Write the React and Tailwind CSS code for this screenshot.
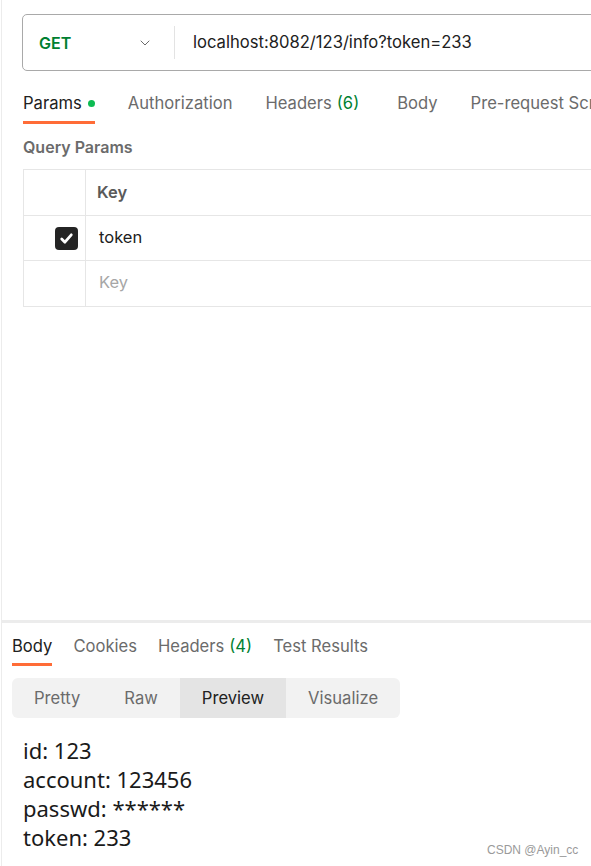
import { ChevronDown } from 'lucide-react'

const requestTabs = [
  { label: 'Params', dot: true, active: true },
  { label: 'Authorization' },
  { label: 'Headers', count: 6 },
  { label: 'Body', extra: true },
  { label: 'Pre-request Script' },
]

const responseTabs = [
  { label: 'Body', active: true },
  { label: 'Cookies' },
  { label: 'Headers', count: 4 },
  { label: 'Test Results' },
]

const modes = ['Pretty', 'Raw', 'Preview', 'Visualize']

const lines = ['id: 123', 'account: 123456', 'passwd: ******', 'token: 233']

export default function App() {
  return (
    <div
      className="relative w-[591px] h-[866px] overflow-hidden bg-white"
      style={{ fontFamily: 'Inter, "Noto Sans", sans-serif' }}
    >
      <div className="ml-px h-full border-l border-[#ececec] flex flex-col">
        {/* Request */}
        <div className="h-[620px] flex-shrink-0">
          {/* URL bar */}
          <div className="mt-[14px] ml-[20px] w-[620px] h-[57px] border border-[#a9a9a9] rounded-[5px] flex items-center">
            <div className="w-[151px] flex items-center justify-between pl-[16px] pr-[21px]">
              <span className="text-[16px] font-semibold text-[#007f31]">GET</span>
              <ChevronDown className="h-[16px] w-[16px] text-[#6b6b6b]" strokeWidth={1.5} />
            </div>
            <div className="w-px h-[33px] bg-[#e3e3e3]" />
            <span className="pl-[18px] text-[16.6px] text-[#212121]">localhost:8082/123/info?token=233</span>
          </div>

          {/* Request tabs */}
          <div className="mt-[17px] ml-[21px] flex gap-[33px] whitespace-nowrap">
            {requestTabs.map(t => (
              <div key={t.label} className={`flex flex-col ${t.extra ? 'ml-[5px]' : ''}`}>
                <div className={`h-[31px] flex items-center text-[16.6px] ${t.active ? 'text-[#212121]' : 'text-[#6b6b6b]'}`}>
                  {t.label}
                  {t.count != null && <span className="ml-[5px] text-[#007f31]">({t.count})</span>}
                  {t.dot && <span className="ml-[6px] h-[7px] w-[7px] rounded-full bg-[#0cbb52]" />}
                </div>
                <div className={`h-[3px] mt-[2px] ${t.active ? 'bg-[#ff6c37]' : ''}`} />
              </div>
            ))}
          </div>

          {/* Query params */}
          <p className="mt-[13px] ml-[21px] text-[16px] font-semibold text-[#6b6b6b] leading-[20px]">Query Params</p>
          <div className="mt-[12px] ml-[21px] w-[620px] border border-[#e6e6e6] text-[16.5px]">
            <div className="h-[46px] flex border-b border-[#e6e6e6]">
              <div className="w-[62px] border-r border-[#e6e6e6]" />
              <div className="pl-[11px] flex items-center font-semibold text-[#5a5a5a]">Key</div>
            </div>
            <div className="h-[45px] flex border-b border-[#e6e6e6]">
              <div className="w-[62px] border-r border-[#e6e6e6] flex items-center justify-end pr-[7px]">
                <div className="h-[23px] w-[23px] rounded-[4px] bg-[#242424] flex items-center justify-center">
                  <svg viewBox="0 0 16 16" className="h-[17px] w-[17px]" fill="none" stroke="white" strokeWidth="2.6" strokeLinecap="round" strokeLinejoin="round">
                    <path d="M3.5 8.5l3 3 6-7" />
                  </svg>
                </div>
              </div>
              <div className="pl-[13px] pb-[2px] flex items-center text-[#212121]">token</div>
            </div>
            <div className="h-[45px] flex">
              <div className="w-[62px] border-r border-[#e6e6e6]" />
              <div className="pl-[13px] pb-[3px] flex items-center text-[#a6a6a6]">Key</div>
            </div>
          </div>
        </div>

        <div className="h-[3px] bg-[#ececec] flex-shrink-0" />

        {/* Response */}
        <div className="flex-1">
          <div className="mt-[9px] ml-[10px] flex gap-[21px] whitespace-nowrap">
            {responseTabs.map(t => (
              <div key={t.label} className="flex flex-col">
                <div className={`h-[28px] flex items-center text-[16.6px] ${t.active ? 'text-[#212121]' : 'text-[#6b6b6b]'}`}>
                  {t.label}
                  {t.count != null && <span className="ml-[5px] text-[#007f31]">({t.count})</span>}
                </div>
                <div className={`h-[3px] mt-[3px] ${t.active ? 'bg-[#ff6c37]' : ''}`} />
              </div>
            ))}
          </div>

          <div className="mt-[12px] ml-[10px] inline-flex h-[40px] rounded-[6px] bg-[#f2f2f2] overflow-hidden">
            {modes.map(m => (
              <div
                key={m}
                className={`px-[22px] flex items-center text-[16.6px] ${m === 'Preview' ? 'bg-[#e4e4e4] text-[#212121]' : 'text-[#6b6b6b]'}`}
              >
                {m}
              </div>
            ))}
          </div>

          <div
            className="mt-[18px] ml-[21px] text-[22px] leading-[29px] text-[#1a1a1a]"
            style={{ fontFamily: '"Noto Sans", "Open Sans", sans-serif' }}
          >
            {lines.map(l => <div key={l}>{l}</div>)}
          </div>
        </div>
      </div>

      <span
        className="absolute left-[487px] top-[841px] text-[12px] text-[#9a9a9a]"
        style={{ fontFamily: '"Liberation Sans", Arial, sans-serif' }}
      >
        CSDN @Ayin_cc
      </span>
    </div>
  )
}
